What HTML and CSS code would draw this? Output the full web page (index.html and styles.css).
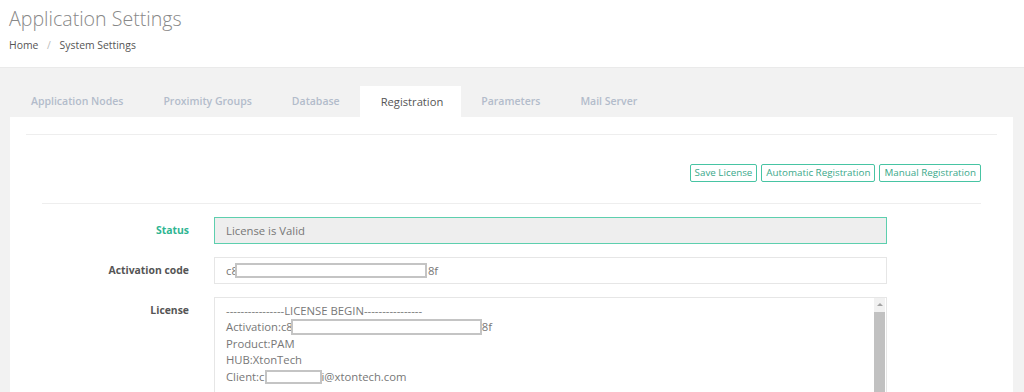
FILE: index.html
```html
<!DOCTYPE html>
<html lang="en">
<head>
    <meta charset="UTF-8">
    <meta name="viewport" content="width=device-width, initial-scale=1.0">
    <title>Application Settings</title>
    <link rel="stylesheet" href="styles.css">
</head>
<body>
    <div class="page-header">
        <h1 class="page-title">Application Settings</h1>
        <div class="breadcrumb">
            <span>Home</span>
            <span class="sep">/</span>
            <span>System Settings</span>
        </div>
    </div>

    <div class="content">
        <ul class="tabs">
            <li>Application Nodes</li>
            <li>Proximity Groups</li>
            <li>Database</li>
            <li class="active">Registration</li>
            <li>Parameters</li>
            <li>Mail Server</li>
        </ul>

        <div class="tab-panel">
            <div class="panel-body">
                <div class="actions">
                    <button class="btn">Save License</button>
                    <button class="btn">Automatic Registration</button>
                    <button class="btn">Manual Registration</button>
                </div>

                <div class="form">
                    <div class="form-row">
                        <label class="status-label">Status</label>
                        <div class="field field-status">License is Valid</div>
                    </div>
                    <div class="form-row">
                        <label>Activation code</label>
                        <div class="field">c8<span class="mask mask-code"></span>8f</div>
                    </div>
                    <div class="form-row">
                        <label>License</label>
                        <div class="field field-license">
                            <div>----------------LICENSE BEGIN----------------</div>
                            <div>Activation:c8<span class="mask mask-act"></span>8f</div>
                            <div>Product:PAM</div>
                            <div>HUB:XtonTech</div>
                            <div>Client:c<span class="mask mask-client"></span>i@xtontech.com</div>
                            <div class="scrollbar">
                                <div class="scroll-up"></div>
                                <div class="scroll-thumb"></div>
                            </div>
                        </div>
                    </div>
                </div>
            </div>
        </div>
    </div>
</body>
</html>
```

FILE: styles.css
```css
body {
    margin: 0;
    background: #f2f2f2;
    font-family: "Open Sans", "Noto Sans", sans-serif;
    color: #555;
    overflow: hidden;
}
.page-header {
    background: #fff;
    height: 68px;
    padding: 6px 9px 0;
    box-sizing: border-box;
    border-bottom: 1px solid #eaeaea;
}
.page-title {
    margin: 0;
    font-size: 19.6px;
    font-weight: 300;
    line-height: 26px;
    color: #888;
}
.breadcrumb {
    margin-top: 6px;
    font-size: 10.4px;
    color: #555;
}
.breadcrumb .sep {
    color: #bbb;
    margin: 0 6px;
}
.content {
    padding: 18px 11px 0 10px;
}
.tabs {
    list-style: none;
    margin: 0;
    padding: 0 0 0 1px;
    display: flex;
    height: 31px;
}
.tabs li {
    padding: 0 20px;
    line-height: 31px;
    font-size: 10.5px;
    font-weight: 600;
    color: #b3bccb;
}
.tabs li.active {
    background: #fff;
    color: #555;
    font-weight: 400;
    padding: 0 18px 0 21px;
    font-size: 11.2px;
}
.tab-panel {
    background: #fff;
    padding: 17px 16px 0;
    height: 300px;
}
.panel-body {
    border-top: 1px solid #eeeeee;
    padding: 29px 16px 0;
}
.actions {
    display: flex;
    justify-content: flex-end;
    gap: 4px;
    padding-bottom: 21px;
    border-bottom: 1px solid #eeeeee;
}
.btn {
    background: #fff;
    border: 1px solid #47c4a3;
    border-radius: 2px;
    color: #3aa88a;
    font-family: inherit;
    font-size: 9.8px;
    height: 18px;
    padding: 0 4px;
    line-height: 16px;
}
.form {
    padding-top: 13px;
}
.form-row {
    display: grid;
    grid-template-columns: 147px 673px;
    column-gap: 25px;
    margin-bottom: 13px;
}
.form-row label {
    text-align: right;
    font-size: 10.4px;
    font-weight: 700;
    color: #555;
    line-height: 27px;
}
.form-row .status-label {
    color: #2fb592;
}
.field {
    height: 27px;
    box-sizing: border-box;
    border: 1px solid #e6e6e6;
    padding: 0 11px;
    font-size: 11.3px;
    line-height: 25px;
    color: #777;
}
.field-status {
    background: #eeeeee;
    border: 1px solid #5dcfae;
    color: #777;
}
.field-license {
    position: relative;
    height: 120px;
    padding-top: 5px;
    line-height: 16.2px;
    color: #777;
}
.mask {
    display: inline-block;
    box-sizing: border-box;
    border: 2px solid #c4c4c4;
    background: #fff;
    vertical-align: middle;
    position: relative;
}
.mask-code {
    width: 192px;
    height: 15px;
    margin-left: -3px;
    margin-right: 1px;
    top: -1px;
}
.mask-act {
    width: 191px;
    height: 16px;
    margin-left: -2px;
    top: -1px;
}
.mask-client {
    width: 57px;
    height: 14px;
    margin-left: 0;
    top: -1px;
}
.scrollbar {
    position: absolute;
    top: 0;
    right: 1px;
    width: 11px;
    bottom: 0;
    background: #f1f1f1;
}
.scroll-up {
    width: 0;
    height: 0;
    margin: 5px auto 0;
    border-left: 3px solid transparent;
    border-right: 3px solid transparent;
    border-bottom: 3px solid #a3a3a3;
}
.scroll-thumb {
    position: absolute;
    top: 14px;
    left: 0;
    right: 0;
    bottom: 0;
    background: #c1c1c1;
}
```
